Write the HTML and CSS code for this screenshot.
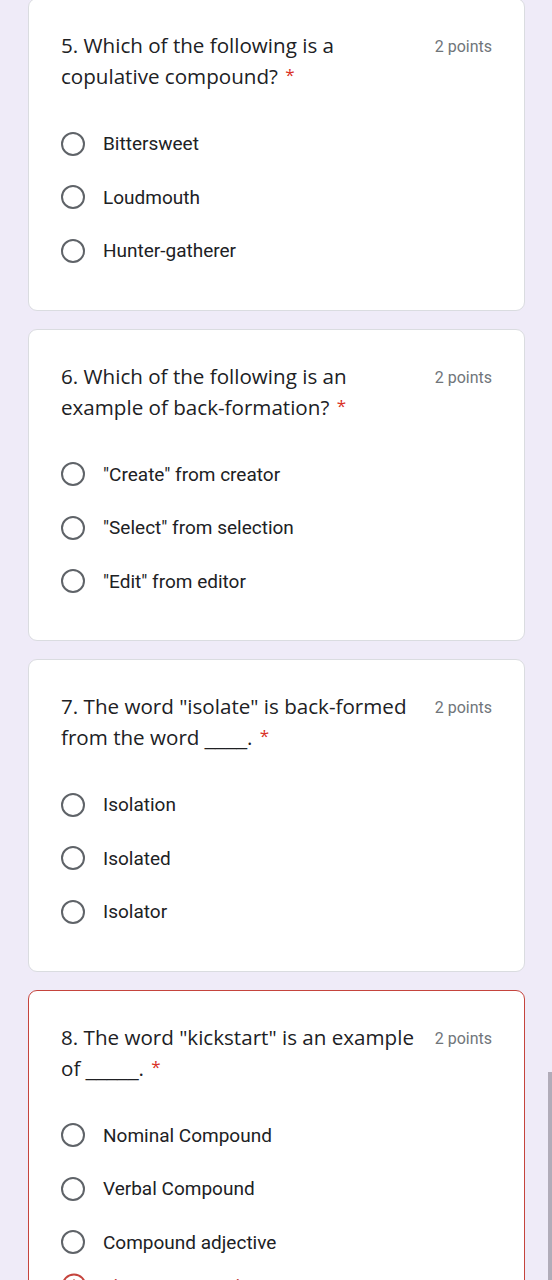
FILE: index.html
```html
<!DOCTYPE html>
<html lang="en">
<head>
    <meta charset="UTF-8">
    <meta name="viewport" content="width=device-width, initial-scale=1.0">
    <title>Quiz</title>
    <link rel="stylesheet" href="styles.css">
</head>
<body>
    <main class="form">
        <div class="card first">
            <div class="card-head">
                <h3 class="question">5. Which of the following is a copulative compound? <span class="req">*</span></h3>
                <span class="points">2 points</span>
            </div>
            <div class="options">
                <label class="option"><span class="radio"></span>Bittersweet</label>
                <label class="option"><span class="radio"></span>Loudmouth</label>
                <label class="option"><span class="radio"></span>Hunter-gatherer</label>
            </div>
        </div>

        <div class="card">
            <div class="card-head">
                <h3 class="question">6. Which of the following is an example of back-formation? <span class="req">*</span></h3>
                <span class="points">2 points</span>
            </div>
            <div class="options">
                <label class="option"><span class="radio"></span>"Create" from creator</label>
                <label class="option"><span class="radio"></span>"Select" from selection</label>
                <label class="option"><span class="radio"></span>"Edit" from editor</label>
            </div>
        </div>

        <div class="card">
            <div class="card-head">
                <h3 class="question">7. The word "isolate" is back-formed from the word <span class="blank">____</span>. <span class="req">*</span></h3>
                <span class="points">2 points</span>
            </div>
            <div class="options">
                <label class="option"><span class="radio"></span>Isolation</label>
                <label class="option"><span class="radio"></span>Isolated</label>
                <label class="option"><span class="radio"></span>Isolator</label>
            </div>
        </div>

        <div class="card error">
            <div class="card-head">
                <h3 class="question">8. The word "kickstart" is an example of <span class="blank">_____</span>. <span class="req">*</span></h3>
                <span class="points">2 points</span>
            </div>
            <div class="options">
                <label class="option"><span class="radio"></span>Nominal Compound</label>
                <label class="option"><span class="radio"></span>Verbal Compound</label>
                <label class="option"><span class="radio"></span>Compound adjective</label>
            </div>
            <div class="error-msg">
                <svg class="error-icon" width="26" height="26" viewBox="0 0 26 26">
                    <circle cx="13" cy="13" r="11.5" fill="none" stroke="#c5443d" stroke-width="2"/>
                    <rect x="12" y="6.5" width="2" height="8" fill="#c5443d"/>
                    <rect x="12" y="16.5" width="2" height="2" fill="#c5443d"/>
                </svg>
                This is a required question
            </div>
        </div>
    </main>
    <div class="scrollbar"></div>
</body>
</html>
```

FILE: styles.css
```css
body {
    margin: 0;
    padding: 0;
    background-color: #efebf8;
    font-family: Roboto, "Liberation Sans", Arial, sans-serif;
    color: #202124;
    overflow: hidden;
}

.form {
    display: flex;
    flex-direction: column;
    gap: 18px;
    padding: 0 27px 0 28px;
}

.card {
    background: #fff;
    border: 1px solid #dadce0;
    border-radius: 9px;
    padding: 31px 32px 32px 32px;
}

.card.first {
    margin-top: -2px;
}

.card.error {
    border-color: #c5443d;
    padding-bottom: 40px;
}

.card-head {
    display: flex;
    justify-content: space-between;
    align-items: flex-start;
    gap: 8px;
}

.question {
    margin: 0;
    font-family: "Open Sans", Roboto, sans-serif;
    font-weight: 400;
    font-size: 20.6px;
    line-height: 31px;
    color: #202124;
}

.blank {
    font-family: "Liberation Sans", Arial, sans-serif;
    font-size: 19px;
    line-height: 0;
}

.req {
    color: #d93025;
    font-size: 17px;
    line-height: 0;
    vertical-align: 3px;
    margin-left: 2px;
}

.points {
    flex-shrink: 0;
    font-size: 16px;
    line-height: 31px;
    color: #70757a;
    padding-top: 1px;
}

.options {
    margin-top: 25px;
    display: flex;
    flex-direction: column;
}

.option {
    display: flex;
    align-items: center;
    height: 53.5px;
    font-size: 19px;
    color: #202124;
}

.radio {
    width: 20px;
    height: 20px;
    border: 2.5px solid #5f6368;
    border-radius: 50%;
    margin-right: 18px;
    flex-shrink: 0;
}

.error-msg {
    display: flex;
    align-items: center;
    height: 34px;
    font-size: 18px;
    color: #c5443d;
}

.error-icon {
    margin-right: 16px;
}

.scrollbar {
    position: fixed;
    right: 0;
    top: 1072px;
    width: 4px;
    height: 208px;
    background: #b1acb9;
}
```
